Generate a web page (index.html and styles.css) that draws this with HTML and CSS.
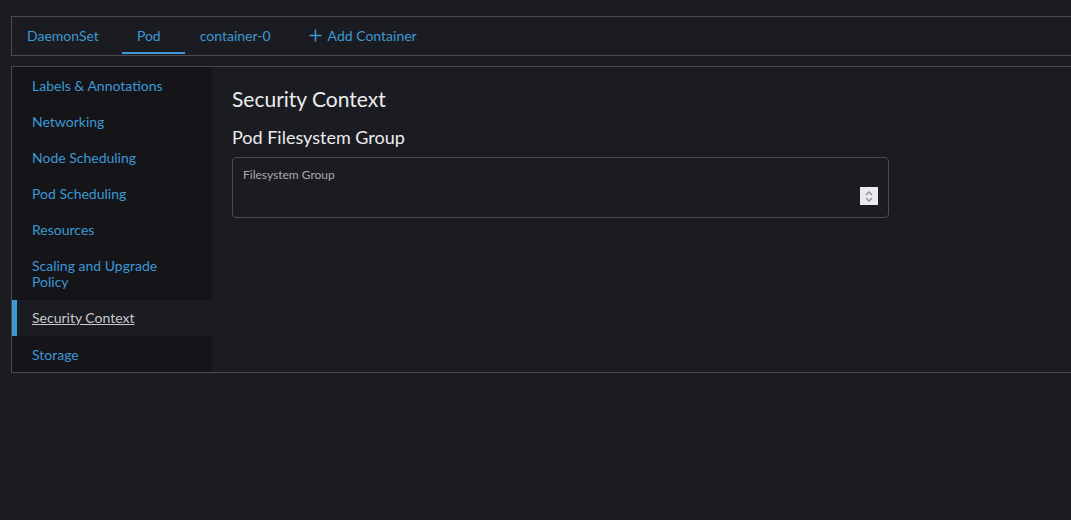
FILE: index.html
```html
<!DOCTYPE html>
<html>
<head>
<meta charset="utf-8">
<link rel="stylesheet" href="styles.css">
</head>
<body>
<div class="page">
  <div class="tabs">
    <a class="tab">DaemonSet</a>
    <a class="tab active">Pod</a>
    <a class="tab">container-0</a>
    <a class="tab add"><svg class="plus" viewBox="0 0 14 14" width="13" height="13"><path d="M7 0.5V13.5M0.5 7H13.5" stroke="currentColor" stroke-width="1.6" fill="none"/></svg>Add Container</a>
  </div>
  <div class="panel">
    <nav class="side">
      <a class="item">Labels &amp; Annotations</a>
      <a class="item">Networking</a>
      <a class="item">Node Scheduling</a>
      <a class="item">Pod Scheduling</a>
      <a class="item">Resources</a>
      <a class="item">Scaling and Upgrade Policy</a>
      <a class="item current">Security Context</a>
      <a class="item last">Storage</a>
    </nav>
    <main class="content">
      <h2 class="title">Security Context</h2>
      <h3 class="subtitle">Pod Filesystem Group</h3>
      <div class="field">
        <label class="field-label">Filesystem Group</label>
        <div class="field-row">
          <span class="spinner"><svg viewBox="0 0 18 18" width="18" height="18"><path d="M6 8L9 5L12 8M6 11L9 14L12 11" stroke="#8a8a90" stroke-width="1.3" fill="none"/></svg></span>
        </div>
      </div>
    </main>
  </div>
</div>
</body>
</html>
```
FILE: styles.css
```css
html, body {
  margin: 0;
  padding: 0;
  background: #1b1c21;
  overflow: hidden;
}
body {
  font-family: Lato, "Noto Sans", sans-serif;
  color: #e6e6e6;
}
.page {
  padding: 16px 0 0 11px;
  width: 1100px;
}
.tabs {
  display: flex;
  height: 38px;
  border: 1px solid #4a4a50;
  border-right: none;
  align-items: stretch;
}
.tab {
  display: flex;
  align-items: center;
  padding: 2px 23px 0 15px;
  font-size: 14px;
  color: #3d98d3;
  border-bottom: 2px solid transparent;
  margin-bottom: 1px;
  cursor: pointer;
}
.tab.active {
  border-bottom-color: #3d98d3;
  padding-right: 24px;
}
.plus { margin-right: 6px; }
.panel {
  margin-top: 10px;
  display: flex;
  border: 1px solid #4a4a50;
  border-right: none;
  height: 305px;
}
.side {
  width: 200px;
  background: #141419;
  display: flex;
  flex-direction: column;
  padding-top: 1px;
}
.item {
  display: block;
  padding: 10px 20px 10px 20px;
  font-size: 14px;
  line-height: 16px;
  color: #3d98d3;
  cursor: pointer;
}
.item.last { padding-top: 11px; }
.item.current {
  background: #1b1c21;
  border-left: 5px solid #3d98d3;
  padding-left: 15px;
  color: #c8c8cc;
  text-decoration: underline;
}
.content {
  flex: 1;
  padding: 19px 20px;
}
.title {
  margin: 0;
  font-size: 21px;
  font-weight: 400;
  line-height: 26px;
  color: #ececec;
}
.subtitle {
  margin: 14px 0 0;
  font-size: 18px;
  font-weight: 400;
  line-height: 22px;
  color: #ececec;
}
.field {
  margin-top: 9px;
  width: 657px;
  height: 61px;
  box-sizing: border-box;
  border: 1px solid #4a4a50;
  border-radius: 4px;
  padding: 10px 10px 0 10px;
}
.field-label {
  display: block;
  font-size: 12px;
  line-height: 14px;
  color: #a9a9ae;
}
.field-row {
  display: flex;
  justify-content: flex-end;
  margin-top: 5px;
}
.spinner {
  display: block;
  width: 18px;
  height: 18px;
  background: #e9e9ef;
}
.spinner svg { display: block; }
```
